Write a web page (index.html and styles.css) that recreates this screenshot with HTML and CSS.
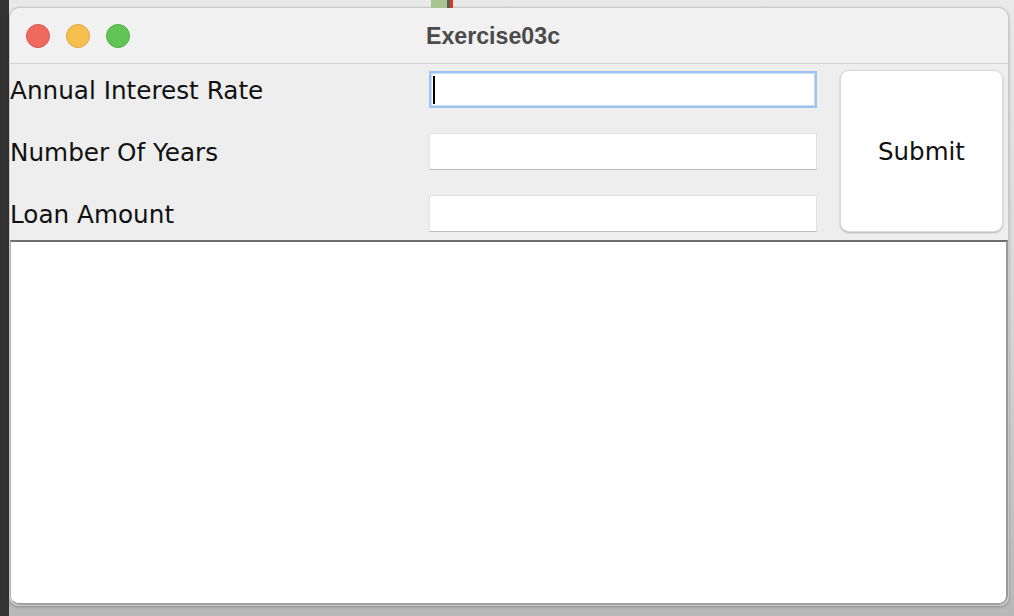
FILE: index.html
```html
<!DOCTYPE html>
<html>
<head>
<meta charset="utf-8">
<link rel="stylesheet" href="styles.css">
</head>
<body>
<div class="desktop">
  <div class="dock-strip"></div>
  <div class="stage">
    <div class="top-strip">
      <span class="bg-green"></span><span class="bg-dark"></span><span class="bg-red"></span>
    </div>
    <div class="window">
      <div class="titlebar">
        <div class="lights">
          <span class="light red"></span>
          <span class="light yellow"></span>
          <span class="light green"></span>
        </div>
        <div class="title">Exercise03c</div>
      </div>
      <div class="form">
        <label class="label r1">Annual Interest Rate</label>
        <div class="field focused r1"><span class="caret"></span></div>
        <label class="label r2">Number Of Years</label>
        <div class="field r2"></div>
        <label class="label r3">Loan Amount</label>
        <div class="field r3"></div>
        <button class="submit">Submit</button>
      </div>
      <div class="output"></div>
    </div>
  </div>
</div>
</body>
</html>
```
FILE: styles.css
```css
html, body {
  margin: 0;
  padding: 0;
}
body {
  width: 1014px;
  height: 616px;
  overflow: hidden;
  background: #b4b4b4;
}
.desktop {
  display: flex;
  height: 616px;
  background: linear-gradient(#e9e9e9 0, #d8d8d8 300px, #b8b8b8 616px);
}
.dock-strip {
  width: 9px;
  flex: none;
  background: #333333;
}
.stage {
  flex: 1;
  display: flex;
  flex-direction: column;
}
.top-strip {
  height: 7px;
  flex: none;
  position: relative;
}
.bg-green {
  position: absolute;
  left: 422px;
  top: 0;
  width: 16px;
  height: 8px;
  background: #a9c28f;
}
.bg-dark {
  position: absolute;
  left: 438px;
  top: 0;
  width: 3px;
  height: 8px;
  background: #5a5e58;
}
.bg-red {
  position: absolute;
  left: 441px;
  top: 0;
  width: 3px;
  height: 8px;
  background: #d8392b;
}
.window {
  width: 1000px;
  height: 599px;
  box-sizing: border-box;
  border: 1px solid #c9c9c9;
  border-radius: 11px 11px 9px 9px;
  overflow: hidden;
  display: flex;
  flex-direction: column;
  background: #eeeeee;
  box-shadow: 0 1px 3px rgba(0,0,0,0.25);
}
.titlebar {
  height: 56px;
  flex: none;
  box-sizing: border-box;
  border-bottom: 1px solid #d3d3d3;
  background: #f1f1f1;
  position: relative;
  display: flex;
  align-items: center;
}
.lights {
  display: flex;
  gap: 16px;
  padding-left: 16px;
  padding-top: 1px;
}
.light {
  width: 24px;
  height: 24px;
  border-radius: 50%;
  box-sizing: border-box;
}
.light.red { background: #ee6a5e; border: 1px solid #d9574c; }
.light.yellow { background: #f5bf4f; border: 1px solid #dea63c; }
.light.green { background: #61c454; border: 1px solid #4fae43; }
.title {
  position: absolute;
  left: 0;
  right: 0;
  top: 0;
  bottom: 0;
  display: flex;
  align-items: center;
  justify-content: center;
  font-family: "Liberation Sans", Arial, sans-serif;
  font-weight: bold;
  font-size: 23.2px;
  color: #4b4b4b;
  padding-right: 32px;
  padding-top: 1px;
}
.form {
  height: 176px;
  flex: none;
  box-sizing: border-box;
  padding: 7px 0 0 0;
  display: grid;
  grid-template-columns: 419px 388px 186px;
  grid-template-rows: 37px 37px 37px;
  row-gap: 25px;
  background: #eeeeee;
}
.label {
  grid-column: 1;
  align-self: center;
  font-family: "DejaVu Sans", sans-serif;
  font-size: 24.7px;
  color: #111111;
  line-height: 1;
  padding-top: 3px;
}
.r1 { grid-row: 1; }
.r2 { grid-row: 2; }
.r3 { grid-row: 3; }
.field {
  grid-column: 2;
  background: #ffffff;
  box-sizing: border-box;
  border: 1px solid #e2e2e2;
  border-bottom: 1px solid #bdbdbd;
  display: flex;
  align-items: center;
}
.field.focused {
  border: 2px solid #9dc3ee;
  box-shadow: inset 0 0 0 1px #c7ddf7;
}
.caret {
  width: 2px;
  height: 28px;
  background: #000000;
  margin-left: 2px;
}
.submit {
  grid-column: 3;
  grid-row: 1 / 4;
  margin: -1px 0 0 23px;
  background: #ffffff;
  border: 1px solid #dadada;
  border-radius: 9px;
  box-shadow: 0 1px 2px rgba(0,0,0,0.25);
  font-family: "DejaVu Sans", sans-serif;
  font-size: 24.5px;
  color: #111111;
  padding: 0;
}
.output {
  flex: 1;
  background: #ffffff;
  border-top: 2px solid #6e6e6e;
  border-left: 1px solid #b0b0b0;
  border-right: 2px solid #9a9a9a;
  border-bottom: 2px solid #a0a0a0;
  border-radius: 0 0 9px 9px;
}
```
